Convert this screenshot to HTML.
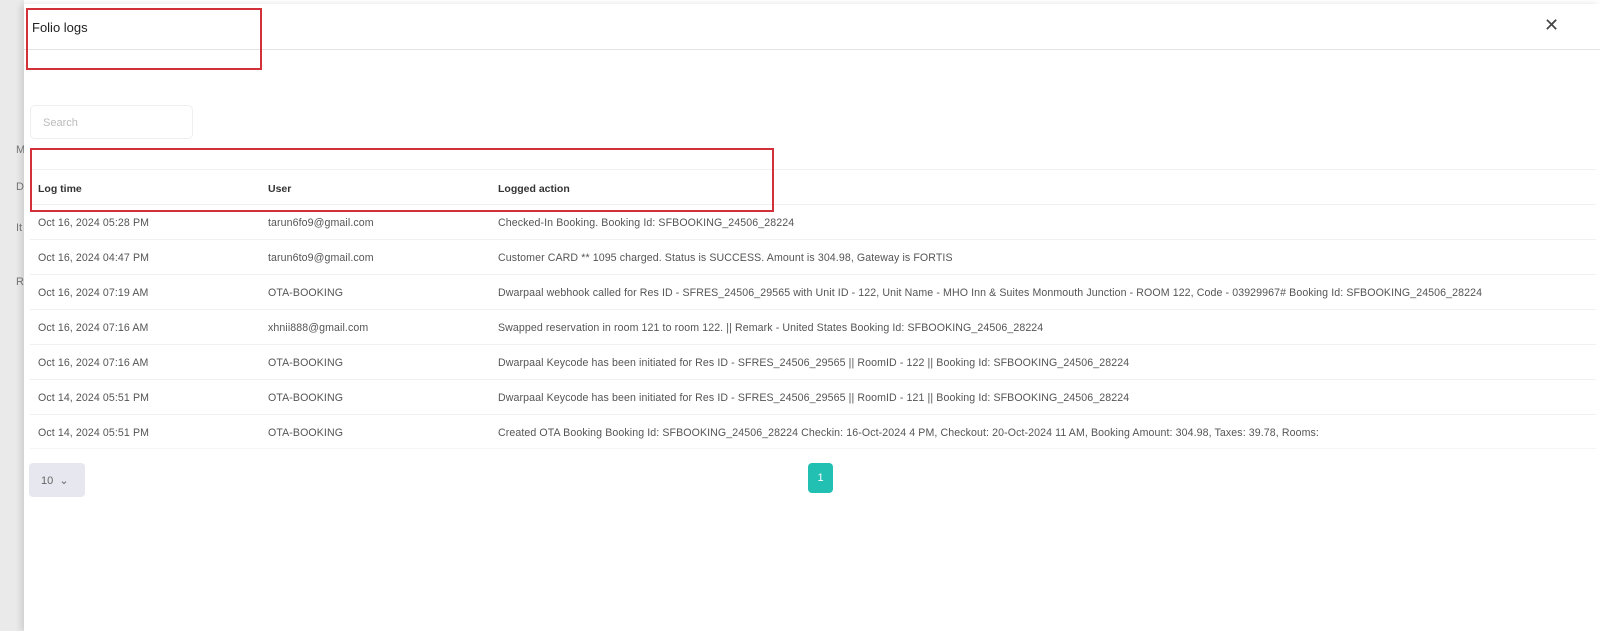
<!DOCTYPE html>
<html><head><style>
*{margin:0;padding:0;box-sizing:border-box}
body{width:1600px;height:631px;overflow:hidden;background:#fff;font-family:"Liberation Sans",sans-serif;position:relative}
.bg{position:absolute;left:0;top:0;width:24px;height:631px;background:#eaeaea}
.bg span{position:absolute;left:16px;font-size:11px;color:#777}
.modal{position:absolute;left:24px;top:4px;width:1576px;height:627px;background:#fff;box-shadow:-3px 0 6px rgba(0,0,0,.12)}
.title{position:absolute;left:8px;top:16px;font-size:13px;color:#222}
.hl{position:absolute;left:0;top:45px;width:1576px;height:1px;background:#e3e3e3}
.close{position:absolute;left:1520px;top:11px;font-size:18px;color:#444}
.red{position:absolute;border:2px solid #d3313a}
.search{position:absolute;left:6px;top:101px;width:163px;height:34px;border:1px solid #eee;border-radius:5px;font-size:11px;color:#bbb;padding:11px 12px}
.row{position:absolute;left:6px;width:1566px;height:35px;border-top:1px solid #f0f0f0;font-size:10.6px;color:#555;letter-spacing:.1px}
.row div{position:absolute;top:12px;white-space:nowrap}
.c1{left:8px}.c2{left:238px}.c3{left:468px}
.hdr{font-weight:bold;color:#333;font-size:10.5px;letter-spacing:0}
.sel{position:absolute;left:5px;top:459px;width:56px;height:34px;background:#e6e7ef;border-radius:4px;font-size:11px;color:#666;padding:11px 12px}
.pg{position:absolute;left:784px;top:459px;width:25px;height:30px;background:#22bfb3;border-radius:4px;color:#fff;font-size:11px;text-align:center;line-height:30px}
</style></head><body>
<div class="bg"><span style="top:144px">M</span><span style="top:181px">D</span><span style="top:222px">It</span><span style="top:276px">R</span></div>
<div class="modal">
<div class="title">Folio logs</div>
<div class="hl"></div>
<div class="close">✕</div>
<div class="search">Search</div>
<div class="row hdr" style="top:165px;height:37px"><div class="c1" style="top:13px">Log time</div><div class="c2" style="top:13px">User</div><div class="c3" style="top:13px">Logged action</div></div>
<div class="row" style="top:200px"><div class="c1">Oct 16, 2024 05:28 PM</div><div class="c2">tarun6fo9@gmail.com</div><div class="c3">Checked-In Booking. Booking Id: SFBOOKING_24506_28224</div></div>
<div class="row" style="top:235px"><div class="c1">Oct 16, 2024 04:47 PM</div><div class="c2">tarun6to9@gmail.com</div><div class="c3">Customer CARD ** 1095 charged. Status is SUCCESS. Amount is 304.98, Gateway is FORTIS</div></div>
<div class="row" style="top:270px"><div class="c1">Oct 16, 2024 07:19 AM</div><div class="c2">OTA-BOOKING</div><div class="c3">Dwarpaal webhook called for Res ID - SFRES_24506_29565 with Unit ID - 122, Unit Name - MHO Inn &amp; Suites Monmouth Junction - ROOM 122, Code - 03929967# Booking Id: SFBOOKING_24506_28224</div></div>
<div class="row" style="top:305px"><div class="c1">Oct 16, 2024 07:16 AM</div><div class="c2">xhnii888@gmail.com</div><div class="c3">Swapped reservation in room 121 to room 122. || Remark - United States Booking Id: SFBOOKING_24506_28224</div></div>
<div class="row" style="top:340px"><div class="c1">Oct 16, 2024 07:16 AM</div><div class="c2">OTA-BOOKING</div><div class="c3">Dwarpaal Keycode has been initiated for Res ID - SFRES_24506_29565 || RoomID - 122 || Booking Id: SFBOOKING_24506_28224</div></div>
<div class="row" style="top:375px"><div class="c1">Oct 14, 2024 05:51 PM</div><div class="c2">OTA-BOOKING</div><div class="c3">Dwarpaal Keycode has been initiated for Res ID - SFRES_24506_29565 || RoomID - 121 || Booking Id: SFBOOKING_24506_28224</div></div>
<div class="row" style="top:410px;border-bottom:1px solid #f5f5f5"><div class="c1">Oct 14, 2024 05:51 PM</div><div class="c2">OTA-BOOKING</div><div class="c3">Created OTA Booking Booking Id: SFBOOKING_24506_28224 Checkin: 16-Oct-2024 4 PM, Checkout: 20-Oct-2024 11 AM, Booking Amount: 304.98, Taxes: 39.78, Rooms:</div></div>
<div class="sel">10 &nbsp;⌄</div>
<div class="pg">1</div>
</div>
<div class="red" style="left:26px;top:8px;width:236px;height:62px"></div>
<div class="red" style="left:30px;top:148px;width:744px;height:64px"></div>
</body></html>
